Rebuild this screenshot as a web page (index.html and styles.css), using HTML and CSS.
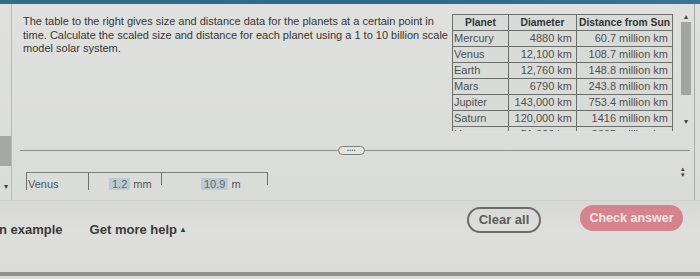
FILE: index.html
```html
<!DOCTYPE html>
<html>
<head>
<meta charset="utf-8">
<link rel="stylesheet" href="styles.css">
</head>
<body>
<div class="screen">
  <div class="topbar"></div>
  <div class="workspace">
    <div class="leftrail">
      <div class="rail-thumb"></div>
      <div class="rail-arrow">&#9662;</div>
    </div>
    <div class="panes">
      <div class="upper">
        <p class="question">The table to the right gives size and distance data for the planets at a certain point in time. Calculate the scaled size and distance for each planet using a 1 to 10 billion scale model solar system.</p>
        <div class="table-wrap">
          <table class="data">
            <colgroup>
              <col class="col-name">
              <col class="col-dia">
              <col class="col-dist">
            </colgroup>
            <thead>
              <tr><th>Planet</th><th>Diameter</th><th>Distance from Sun</th></tr>
            </thead>
            <tbody>
              <tr><td class="name">Mercury</td><td>4880 km</td><td>60.7 million km</td></tr>
              <tr><td class="name">Venus</td><td>12,100 km</td><td>108.7 million km</td></tr>
              <tr><td class="name">Earth</td><td>12,760 km</td><td>148.8 million km</td></tr>
              <tr><td class="name">Mars</td><td>6790 km</td><td>243.8 million km</td></tr>
              <tr><td class="name">Jupiter</td><td>143,000 km</td><td>753.4 million km</td></tr>
              <tr><td class="name">Saturn</td><td>120,000 km</td><td>1416 million km</td></tr>
              <tr><td class="name">Uranus</td><td>51,800 km</td><td>2865 million km</td></tr>
            </tbody>
          </table>
        </div>
        <div class="scrollbar">
          <div class="sb-arrow">&#9652;</div>
          <div class="sb-thumb"></div>
          <div class="sb-arrow down">&#9662;</div>
        </div>
      </div>
      <div class="divider">
        <span class="line short"></span>
        <span class="pill">&#8226;&#8226;&#8226;&#8226;</span>
        <span class="line"></span>
      </div>
      <div class="lower">
        <div class="answer">
          <div class="cell c1">Venus</div>
          <div class="cell c2"><span class="filled">1.2</span> mm</div>
          <div class="cell c3"><span class="filled">10.9</span> m</div>
        </div>
        <div class="spinner"><span>&#9652;</span><span>&#9662;</span></div>
      </div>
    </div>
  </div>
  <div class="footer">
    <span class="link example">n example</span>
    <span class="link help">Get more help <span class="caret">&#9652;</span></span>
    <span class="spacer"></span>
    <span class="btn clear">Clear all</span>
    <span class="btn check">Check answer</span>
  </div>
  <div class="bottomedge"></div>
</div>
</body>
</html>
```

FILE: styles.css
```css
html, body {
  margin: 0;
  padding: 0;
}
body {
  width: 700px;
  height: 279px;
  overflow: hidden;
  background: #dcdddb;
  font-family: "Liberation Sans", Arial, sans-serif;
  color: #3a3a3a;
}
.screen {
  display: flex;
  flex-direction: column;
  width: 700px;
  height: 279px;
}
.topbar {
  height: 4px;
  background: linear-gradient(90deg, #2f6f86, #2c6a88 60%, #3a7490);
}
.workspace {
  display: flex;
  height: 196px;
  background: linear-gradient(180deg, #e0e1de, #dadcd9);
}
.leftrail {
  width: 11px;
  border-right: 1px solid #b8bab7;
  display: flex;
  flex-direction: column;
  align-items: center;
}
.rail-thumb {
  margin-top: 132px;
  width: 11px;
  height: 30px;
  background: #a6a8a5;
}
.rail-arrow {
  margin-top: 17px;
  font-size: 8px;
  color: #444;
  line-height: 8px;
}
.panes {
  flex: 1;
  display: flex;
  flex-direction: column;
  border-right: 1px solid #a9aba8;
  margin-right: 5px;
}
.upper {
  height: 131px;
  padding-top: 10px;
  display: flex;
  align-items: flex-start;
}
.question {
  margin: 1px 0 0 11px;
  width: 429px;
  font-size: 11px;
  line-height: 13.5px;
  color: #363636;
}
.table-wrap {
  width: 221px;
  height: 117px;
  overflow: hidden;
}
.data {
  border-collapse: collapse;
  table-layout: fixed;
  width: 220px;
  font-size: 11px;
  color: #505050;
  background: #d9dbd8;
}
.col-name { width: 56px; }
.col-dia { width: 68px; }
.col-dist { width: 96px; }
.data th, .data td {
  border: 1px solid #6d6f6c;
  height: 15px;
  padding: 0 4px 0 2px;
  line-height: 15px;
  white-space: nowrap;
  overflow: hidden;
}
.data th {
  font-weight: bold;
  font-size: 10.3px;
  color: #333;
  text-align: center;
  padding: 0 1px;
}
.data td { text-align: right; }
.data td.name { text-align: left; padding-left: 1px; }
.scrollbar {
  margin-left: 8px;
  margin-top: -2px;
  width: 10px;
  height: 118px;
  display: flex;
  flex-direction: column;
  align-items: center;
}
.sb-arrow {
  font-size: 8px;
  line-height: 9px;
  height: 9px;
  color: #444;
}
.sb-thumb {
  margin-top: 1px;
  width: 10px;
  height: 73px;
  background: #a3a5a2;
}
.sb-arrow.down {
  margin-top: auto;
  margin-bottom: 4px;
}
.divider {
  height: 10px;
  display: flex;
  align-items: center;
  padding: 0 4px 0 8px;
}
.line {
  flex: 1;
  height: 1px;
  background: #8e908d;
}
.line.short {
  flex: 0 0 318px;
}
.pill {
  width: 25px;
  height: 7px;
  border: 1px solid #7d7f7c;
  border-radius: 5px;
  font-size: 5px;
  line-height: 7px;
  text-align: center;
  letter-spacing: 0.5px;
  color: #666;
  background: #e4e5e2;
}
.lower {
  flex: 1;
  display: flex;
  align-items: flex-start;
  padding-top: 17px;
}
.answer {
  display: flex;
  margin-left: 14px;
  border-top: 1px solid #7a7c79;
}
.cell {
  height: 12px;
  padding-top: 5px;
  font-size: 11px;
  line-height: 12px;
  color: #555;
  border-right: 1px solid #6f716e;
}
.c1 {
  width: 60px;
  border-left: 1px solid #6f716e;
  padding-left: 1px;
}
.c2 { padding-left: 20px; box-sizing: border-box; width: 73px; }
.c3 { padding-left: 39px; box-sizing: border-box; width: 106px; }
.filled {
  background: #bccad2;
  padding: 0 3px;
  color: #5a6a74;
}
.spinner {
  margin-left: auto;
  margin-right: 9px;
  margin-top: -6px;
  display: flex;
  flex-direction: column;
  font-size: 7px;
  line-height: 6px;
  color: #444;
}
.spinner span {
  height: 6px;
}
.footer {
  height: 71px;
  display: flex;
  align-items: flex-start;
  background: linear-gradient(180deg, #d8d9d6, #dedfdc 40%, #dbdcd9);
  border-top: 1px solid #d0d1ce;
}
.link {
  font-size: 13px;
  font-weight: bold;
  color: #3a3a3a;
  margin-top: 21px;
  line-height: 16px;
}
.example {
  margin-left: -1px;
}
.help {
  margin-left: 27px;
}
.caret {
  font-size: 8px;
  vertical-align: 2px;
}
.spacer {
  flex: 1;
}
.btn {
  font-size: 13px;
  font-weight: bold;
  border-radius: 14px;
  white-space: nowrap;
  box-sizing: border-box;
  text-align: center;
}
.clear {
  margin-top: 6px;
  width: 74px;
  height: 26px;
  line-height: 22px;
  border: 2px solid #6a6c69;
  color: #5a5a5a;
}
.check {
  margin-top: 4px;
  margin-left: 39px;
  margin-right: 17px;
  width: 103px;
  height: 26px;
  line-height: 26px;
  background: #d5848d;
  color: #f6e4e6;
  font-size: 12.5px;
}
.bottomedge {
  height: 4px;
  background: #8f918e;
}
```
